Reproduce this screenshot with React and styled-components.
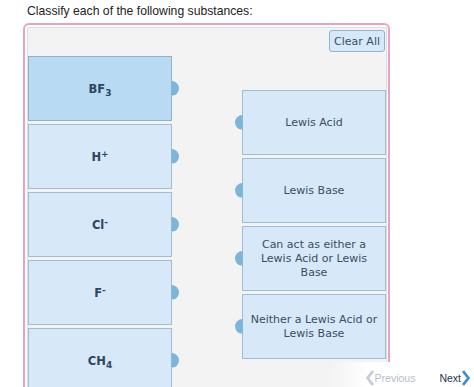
import React from 'react';
import styled, {createGlobalStyle} from 'styled-components';

const GlobalStyle = createGlobalStyle`
  html, body {
    margin: 0;
    padding: 0;
    background: #ffffff;
  }
  body {
    font-family: 'DejaVu Sans', Verdana, sans-serif;
    width: 474px;
    height: 387px;
    overflow: hidden;
  }
`;

const Page = styled.div`
  position: relative;
  width: 474px;
  height: 387px;
  overflow: hidden;
`;

const Title = styled.div`
  padding: 4px 0 0 27px;
  font-family: 'Liberation Sans', Arial, sans-serif;
  font-size: 12.2px;
  line-height: 14px;
  color: #222222;
`;

const Frame = styled.div`
  margin: 5px 0 0 23px;
  width: 360px;
  border: 2px solid #e8a2c2;
  border-radius: 6px;
  padding: 2px 1px 2px 2px;
  background: #ffffff;
`;

const Inner = styled.div`
  border: 1px solid #dedede;
  background: #f3f3f3;
  height: 400px;
`;

const Toolbar = styled.div`
  display: flex;
  justify-content: flex-end;
  padding: 2px 1px 0 0;
`;

const ClearButton = styled.button`
  height: 22px;
  padding: 0 4px;
  font-family: 'DejaVu Sans', Verdana, sans-serif;
  font-size: 11px;
  color: #3a4e66;
  background: #d7e9f8;
  border: 1px solid #8fb4cf;
  border-radius: 3px;
`;

const Board = styled.div`
  display: flex;
  justify-content: space-between;
  padding-top: 4px;
`;

const Column = styled.div`
  display: flex;
  flex-direction: column;
  gap: 3px;
  padding-top: ${(p) => p.offset || 0}px;
`;

const Card = styled.div`
  position: relative;
  box-sizing: border-box;
  width: 144px;
  height: 65px;
  display: flex;
  align-items: center;
  justify-content: center;
  text-align: center;
  padding: 0 6px;
  background: ${(p) => (p.selected ? '#b9daf3' : '#d7e9f8')};
  border: 1px solid ${(p) => (p.selected ? '#8fb2cb' : '#a0bdd1')};
  color: #3b4c63;
  font-size: 11px;
  line-height: 14px;

  &::after {
    content: '';
    position: absolute;
    top: 50%;
    width: 15px;
    height: 15px;
    margin-top: -8px;
    border-radius: 50%;
    background: #7cb5da;
    ${(p) => (p.tab === 'right' ? 'right: -8px; clip-path: inset(0 0 0 50%);' : 'left: -8px; clip-path: inset(0 50% 0 0);')}
  }
`;

const Formula = styled.span`
  font-weight: bold;
  color: #2e4560;
  font-size: 11.5px;

  sub {
    font-size: 9px;
    vertical-align: -3px;
    line-height: 0;
  }
  sup {
    font-size: 9px;
    vertical-align: 4px;
    line-height: 0;
  }
`;

const Nav = styled.div`
  position: absolute;
  left: 330px;
  right: 0;
  top: 362px;
  bottom: 0;
  display: flex;
  align-items: center;
  justify-content: flex-end;
  gap: 24px;
  padding-right: 4px;
  background: linear-gradient(to right, rgba(255, 255, 255, 0) 0px, #ffffff 38px);
  font-family: 'Liberation Sans', Arial, sans-serif;
  font-size: 10.5px;
`;

const NavLink = styled.span`
  display: flex;
  align-items: center;
  gap: 1px;
  color: ${(p) => (p.disabled ? '#b4bec9' : '#22364f')};
  padding-top: 6px;
`;

const Chevron = ({dir, color}) => (
  <svg width="8" height="16" viewBox="0 0 8 16">
    <path
      d={dir === 'left' ? 'M7 1 L1.5 8 L7 15' : 'M1 1 L6.5 8 L1 15'}
      fill="none"
      stroke={color}
      strokeWidth="2.8"
      strokeLinejoin="miter"
    />
  </svg>
);

const substances = [
  {key: 'bf3', label: <>BF<sub>3</sub></>, selected: true},
  {key: 'h', label: <>H<sup>+</sup></>},
  {key: 'cl', label: <>Cl<sup>-</sup></>},
  {key: 'f', label: <>F<sup>-</sup></>},
  {key: 'ch4', label: <>CH<sub>4</sub></>},
];

const categories = [
  'Lewis Acid',
  'Lewis Base',
  'Can act as either a Lewis Acid or Lewis Base',
  'Neither a Lewis Acid or Lewis Base',
];

export default function App() {
  return (
    <Page>
      <GlobalStyle />
      <Title>Classify each of the following substances:</Title>
      <Frame>
        <Inner>
          <Toolbar>
            <ClearButton>Clear All</ClearButton>
          </Toolbar>
          <Board>
            <Column>
              {substances.map((s) => (
                <Card key={s.key} tab="right" selected={s.selected}>
                  <Formula>{s.label}</Formula>
                </Card>
              ))}
            </Column>
            <Column offset={34}>
              {categories.map((c) => (
                <Card key={c} tab="left">
                  {c}
                </Card>
              ))}
            </Column>
          </Board>
        </Inner>
      </Frame>
      <Nav>
        <NavLink disabled>
          <Chevron dir="left" color="#c3ccd6" />
          Previous
        </NavLink>
        <NavLink>
          Next
          <Chevron dir="right" color="#3d8fd6" />
        </NavLink>
      </Nav>
    </Page>
  );
}
